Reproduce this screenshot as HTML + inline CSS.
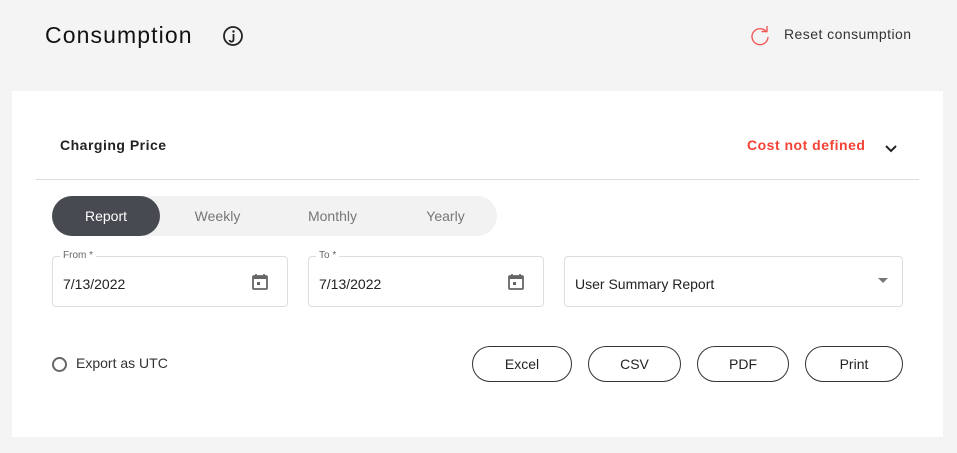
<!DOCTYPE html>
<html><head><style>
*{box-sizing:border-box;margin:0;padding:0}
body{width:957px;height:453px;background:#f4f4f4;font-family:"Liberation Sans",sans-serif;position:relative;overflow:hidden;color:#222}
.a{position:absolute}
.card{left:12px;top:91px;width:931px;height:346px;background:#fff}
.field{border:1px solid #ddd;border-radius:4px;height:51px;top:256px}
.lbl{font-size:10px;color:#666;background:#fff;padding:0 3px;top:-7px;left:7px}
.val{font-size:14px;left:10px;top:19px;color:#222}
.btn{top:346px;height:36px;border:1px solid #333;border-radius:18px;font-size:14px;text-align:center;line-height:34px}
.tab{top:196px;height:40px;line-height:40px;font-size:14px;color:#777;text-align:center}
</style></head><body>
<div class="a" style="left:45px;top:22px;font-size:23px;color:#111;letter-spacing:1.1px">Consumption</div>
<svg class="a" style="left:222px;top:25px" width="22" height="22" viewBox="0 0 22 22"><circle cx="11" cy="11" r="9" fill="none" stroke="#222" stroke-width="1.8"/><circle cx="11.5" cy="6.5" r="1.2" fill="#222"/><path d="M11.5 9v5.5a2 2 0 0 1-4 .5" fill="none" stroke="#222" stroke-width="1.8"/></svg>
<svg class="a" style="left:749px;top:25px" width="22" height="22" viewBox="0 0 22 22"><path d="M17.5 7A8 8 0 1 0 19 12" fill="none" stroke="#f25a5a" stroke-width="1.4"/><path d="M12.5 6.5H18V1" fill="none" stroke="#f25a5a" stroke-width="1.4"/></svg>
<div class="a" style="left:784px;top:26px;font-size:14px;color:#333;letter-spacing:0.45px">Reset consumption</div>
<div class="a card"></div>
<div class="a" style="left:60px;top:137px;font-size:14px;font-weight:bold;color:#222;letter-spacing:0.5px">Charging Price</div>
<div class="a" style="left:747px;top:137px;font-size:14px;font-weight:bold;color:#f44336;letter-spacing:0.5px">Cost not defined</div>
<svg class="a" style="left:884px;top:143px" width="14" height="12" viewBox="0 0 14 12"><path d="M2 3l5 5 5-5" fill="none" stroke="#222" stroke-width="2"/></svg>
<div class="a" style="left:36px;top:179px;width:883px;height:1px;background:#ddd"></div>
<div class="a" style="left:52px;top:196px;width:445px;height:40px;background:#f2f2f2;border-radius:20px"></div>
<div class="a tab" style="left:52px;width:108px;background:#474a51;color:#fff;border-radius:20px">Report</div>
<div class="a tab" style="left:170px;width:95px">Weekly</div>
<div class="a tab" style="left:285px;width:95px">Monthly</div>
<div class="a tab" style="left:398px;width:95px">Yearly</div>
<div class="a field" style="left:52px;width:236px"><span class="a lbl">From *</span><span class="a val">7/13/2022</span>
<svg class="a" style="left:198px;top:16px" width="18" height="18" viewBox="0 0 18 18"><rect x="2" y="3" width="14" height="13" rx="1" fill="none" stroke="#666" stroke-width="1.8"/><rect x="2" y="3" width="14" height="3" fill="#666"/><path d="M5 1v3M13 1v3" stroke="#666" stroke-width="1.6"/><rect x="6" y="9" width="3" height="3" fill="#666"/></svg></div>
<div class="a field" style="left:308px;width:236px"><span class="a lbl">To *</span><span class="a val">7/13/2022</span>
<svg class="a" style="left:198px;top:16px" width="18" height="18" viewBox="0 0 18 18"><rect x="2" y="3" width="14" height="13" rx="1" fill="none" stroke="#666" stroke-width="1.8"/><rect x="2" y="3" width="14" height="3" fill="#666"/><path d="M5 1v3M13 1v3" stroke="#666" stroke-width="1.6"/><rect x="6" y="9" width="3" height="3" fill="#666"/></svg></div>
<div class="a field" style="left:564px;width:339px"><span class="a val" style="top:19px">User Summary Report</span>
<div class="a" style="left:313px;top:21px;border-left:5px solid transparent;border-right:5px solid transparent;border-top:5px solid #777"></div></div>
<div class="a" style="left:52px;top:357px;width:15px;height:15px;border:2px solid #666;border-radius:50%"></div>
<div class="a" style="left:76px;top:355px;font-size:14px;color:#333">Export as UTC</div>
<div class="a btn" style="left:472px;width:100px">Excel</div>
<div class="a btn" style="left:588px;width:93px">CSV</div>
<div class="a btn" style="left:697px;width:92px">PDF</div>
<div class="a btn" style="left:805px;width:98px">Print</div>
</body></html>
